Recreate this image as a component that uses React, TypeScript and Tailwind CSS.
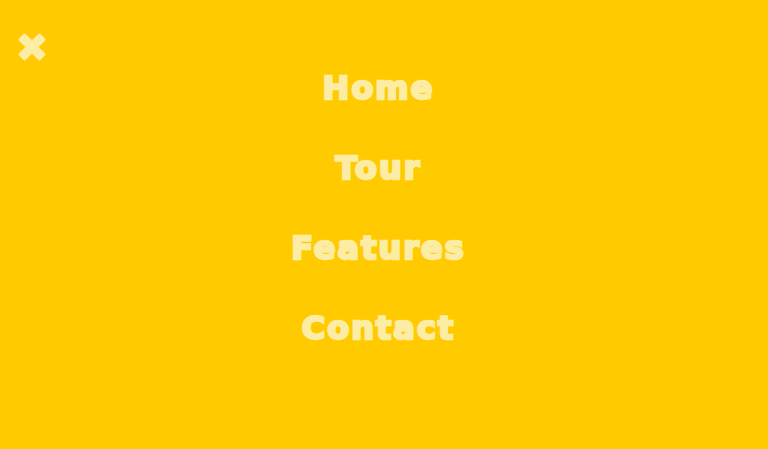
import React from 'react';

const links = ['Home', 'Tour', 'Features', 'Contact'];

const App: React.FC = () => {
  return (
    <div className="h-[449px] w-full overflow-hidden bg-[#ffca00] font-['DejaVu_Sans',sans-serif]">
      <div className="relative">
        <button className="absolute left-[17px] top-[32px] h-[30px] w-[30px]" aria-label="Close">
          <svg viewBox="0 0 30 30" className="h-[30px] w-[30px]">
            <path
              d="M15 10.4 L22.4 3 L27 7.6 L19.6 15 L27 22.4 L22.4 27 L15 19.6 L7.6 27 L3 22.4 L10.4 15 L3 7.6 L7.6 3 Z"
              fill="#fdeca3"
              stroke="#fdeca3"
              strokeWidth="3"
              strokeLinejoin="round"
            />
          </svg>
        </button>
      </div>
      <ul className="flex flex-col items-center pt-[48px] pr-[11px]">
        {links.map(link => (
          <li key={link} className="flex h-[80px] items-center">
            <a className="text-[32px] leading-none font-bold tracking-[2px] text-[#fdeca3] [-webkit-text-stroke:2.5px_#fdeca3]">
              {link}
            </a>
          </li>
        ))}
      </ul>
    </div>
  );
};

export default App;
